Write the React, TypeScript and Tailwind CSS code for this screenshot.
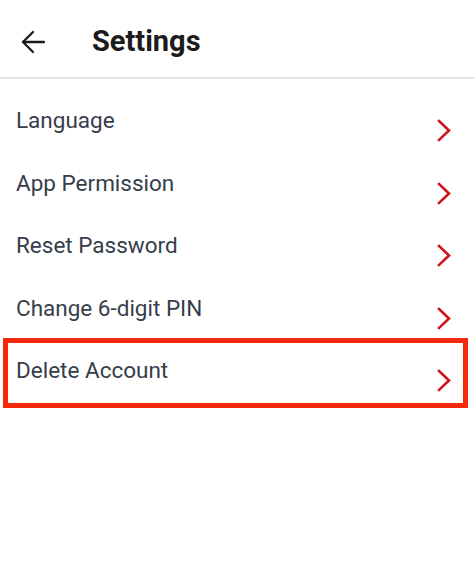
export default function App() {
  const items = ['Language', 'App Permission', 'Reset Password', 'Change 6-digit PIN', 'Delete Account'];

  return (
    <div className="w-[474px] h-[575px] bg-white overflow-hidden" style={{ fontFamily: 'Roboto, "Liberation Sans", sans-serif' }}>
      {/* Header */}
      <header className="h-[79px] pt-[6px] flex items-center border-b-2 border-[#e4e4e4]">
        <div className="w-[92px] pl-[21px] flex items-center">
          <svg width="24" height="24" viewBox="0 0 24 24" fill="none" stroke="#1a1a1a" strokeWidth="2.3" strokeLinecap="round" strokeLinejoin="round">
            <path d="M23 12H2" />
            <path d="M12 2L2 12L12 22" />
          </svg>
        </div>
        <h1 className="text-[29px] font-bold text-[#1c1c1c] leading-none">Settings</h1>
      </header>

      {/* List */}
      <div className="pt-[16px]">
        {items.map((label, i) => (
          <div key={label} className="relative h-[62.5px] flex justify-between pl-4 pr-[22px]">
            <span className="pt-[12px] text-[22.5px] leading-[27px] text-[#363d4b]">{label}</span>
            <svg className="mt-[23px]" width="16" height="24" viewBox="0 0 16 24" fill="none" stroke="#d1131b" strokeWidth="2.6" strokeLinecap="square">
              <path d="M3 3L13 12.5L3 22" />
            </svg>
            {i === items.length - 1 && (
              <div className="absolute -top-[7px] left-[3px] right-[6px] bottom-0 border-[5px] border-[#f7290d]" />
            )}
          </div>
        ))}
      </div>
    </div>
  );
}
